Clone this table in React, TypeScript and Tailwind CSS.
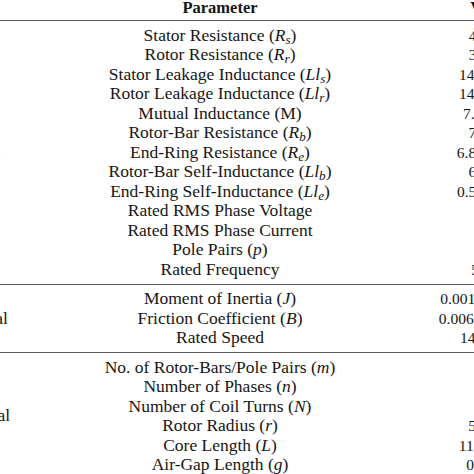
import type { ReactNode } from "react";

interface IRow {
  name: ReactNode;
  value: ReactNode;
}

interface ISection {
  group: string;
  rows: IRow[];
}

const It = ({ children }: { children: ReactNode }) => <i>{children}</i>;

const SECTIONS: ISection[] = [
  {
    group: "Electrical",
    rows: [
      { name: <>Stator Resistance (<It>R<sub>s</sub></It>)</>, value: "4.36 Ω" },
      { name: <>Rotor Resistance (<It>R<sub>r</sub></It>)</>, value: "3.42 Ω" },
      { name: <>Stator Leakage Inductance (<It>Ll<sub>s</sub></It>)</>, value: "14.65 mH" },
      { name: <>Rotor Leakage Inductance (<It>Ll<sub>r</sub></It>)</>, value: "14.65 mH" },
      { name: <>Mutual Inductance (M)</>, value: "7.56 mH" },
      { name: <>Rotor-Bar Resistance (<It>R<sub>b</sub></It>)</>, value: "7.2 μΩ" },
      { name: <>End-Ring Resistance (<It>R<sub>e</sub></It>)</>, value: "6.8571 μΩ" },
      { name: <>Rotor-Bar Self-Inductance (<It>Ll<sub>b</sub></It>)</>, value: "6.2 μH" },
      { name: <>End-Ring Self-Inductance (<It>Ll<sub>e</sub></It>)</>, value: "0.5624 μH" },
      { name: <>Rated RMS Phase Voltage</>, value: "220" },
      { name: <>Rated RMS Phase Current</>, value: "2.8" },
      { name: <>Pole Pairs (<It>p</It>)</>, value: "2" },
      { name: <>Rated Frequency</>, value: "50 Hz" },
    ],
  },
  {
    group: "Mechanical",
    rows: [
      { name: <>Moment of Inertia (<It>J</It>)</>, value: "0.001349 kg·m²" },
      { name: <>Friction Coefficient (<It>B</It>)</>, value: "0.006 N·m·s/rad" },
      { name: <>Rated Speed</>, value: "1420 rpm" },
    ],
  },
  {
    group: "Geometrical",
    rows: [
      { name: <>No. of Rotor-Bars/Pole Pairs (<It>m</It>)</>, value: "28" },
      { name: <>Number of Phases (<It>n</It>)</>, value: "3" },
      { name: <>Number of Coil Turns (<It>N</It>)</>, value: "90" },
      { name: <>Rotor Radius (<It>r</It>)</>, value: "50 mm" },
      { name: <>Core Length (<It>L</It>)</>, value: "110.0 mm" },
      { name: <>Air-Gap Length (<It>g</It>)</>, value: "0.5 mm" },
    ],
  },
];

const App = () => {
  return (
    <div className="w-[474px] h-[474px] overflow-hidden bg-white text-[#161616] font-['Liberation_Serif',serif] text-[17.5px]">
      <div className="w-[634px] -ml-[80px] -mt-[3.5px]">
        <div className="grid grid-cols-[94px_412px_128px] pt-[1px] pb-[3px] text-[16.5px] font-bold leading-[19.5px]">
          <div className="text-center">Type</div>
          <div className="text-center">Parameter</div>
          <div className="text-center">Value</div>
        </div>
        {SECTIONS.map((section) => (
          <div
            key={section.group}
            className="grid grid-cols-[94px_412px_128px] border-t-[1.5px] border-[#5e5e5e] py-[4.5px] leading-[19.5px]"
          >
            <div className="flex items-center justify-center text-center">
              {section.group}
            </div>
            <div className="flex flex-col">
              {section.rows.map((row, i) => (
                <div key={i} className="h-[19.5px] text-center whitespace-nowrap">
                  {row.name}
                </div>
              ))}
            </div>
            <div className="flex flex-col text-[15.5px]">
              {section.rows.map((row, i) => (
                <div key={i} className="h-[19.5px] text-center whitespace-nowrap">
                  {row.value}
                </div>
              ))}
            </div>
          </div>
        ))}
      </div>
    </div>
  );
};

export default App;
